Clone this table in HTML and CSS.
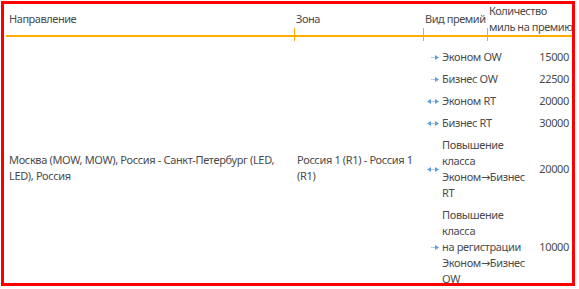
FILE: index.html
```html
<!DOCTYPE html>
<html lang="ru">
<head>
<meta charset="utf-8">
<title>Премии</title>
<link rel="stylesheet" href="styles.css">
</head>
<body>
<table class="routes">
  <colgroup>
    <col class="c-dir"><col class="c-zone"><col class="c-type"><col class="c-miles">
  </colgroup>
  <thead>
    <tr>
      <th class="h-dir">Направление</th>
      <th class="tick">Зона</th>
      <th class="tick">Вид премий</th>
      <th class="tick">Количество миль на премию</th>
    </tr>
  </thead>
  <tbody>
    <tr>
      <td class="dir">Москва (MOW, MOW), Россия - Санкт-Петербург (LED, LED), Россия</td>
      <td class="zone">Россия 1 (R1) - Россия 1 (R1)</td>
      <td class="awards-cell" colspan="2">
        <table class="awards">
          <colgroup><col class="a-ico"><col class="a-name"><col class="a-miles"></colgroup>
          <tbody>
            <tr>
              <td class="ico"><svg class="arr ow" width="8" height="5" viewBox="0 0 8 5"><rect x="0" y="2" width="5" height="1" fill="#a9cdee"/><path d="M4 0L8 2.5L4 5Z" fill="#5e9fdc"/></svg></td>
              <td class="name">Эконом OW</td>
              <td class="miles">15000</td>
            </tr>
            <tr>
              <td class="ico"><svg class="arr ow" width="8" height="5" viewBox="0 0 8 5"><rect x="0" y="2" width="5" height="1" fill="#a9cdee"/><path d="M4 0L8 2.5L4 5Z" fill="#5e9fdc"/></svg></td>
              <td class="name">Бизнес OW</td>
              <td class="miles">22500</td>
            </tr>
            <tr>
              <td class="ico"><svg class="arr rt" width="12" height="5" viewBox="0 0 12 5"><rect x="3" y="2" width="6" height="1" fill="#a9cdee"/><path d="M4 0L0 2.5L4 5Z M8 0L12 2.5L8 5Z" fill="#5e9fdc"/></svg></td>
              <td class="name">Эконом RT</td>
              <td class="miles">20000</td>
            </tr>
            <tr>
              <td class="ico"><svg class="arr rt" width="12" height="5" viewBox="0 0 12 5"><rect x="3" y="2" width="6" height="1" fill="#a9cdee"/><path d="M4 0L0 2.5L4 5Z M8 0L12 2.5L8 5Z" fill="#5e9fdc"/></svg></td>
              <td class="name">Бизнес RT</td>
              <td class="miles">30000</td>
            </tr>
            <tr>
              <td class="ico"><svg class="arr rt" width="12" height="5" viewBox="0 0 12 5"><rect x="3" y="2" width="6" height="1" fill="#a9cdee"/><path d="M4 0L0 2.5L4 5Z M8 0L12 2.5L8 5Z" fill="#5e9fdc"/></svg></td>
              <td class="name">Повышение класса Эконом→Бизнес RT</td>
              <td class="miles">20000</td>
            </tr>
            <tr>
              <td class="ico"><svg class="arr ow" width="8" height="5" viewBox="0 0 8 5"><rect x="0" y="2" width="5" height="1" fill="#a9cdee"/><path d="M4 0L8 2.5L4 5Z" fill="#5e9fdc"/></svg></td>
              <td class="name">Повышение класса<br>на регистрации Эконом→Бизнес OW</td>
              <td class="miles">10000</td>
            </tr>
          </tbody>
        </table>
      </td>
    </tr>
  </tbody>
</table>
<div class="frame"></div>
</body>
</html>
```
FILE: styles.css
```css
html, body {
  margin: 0;
  padding: 0;
  background: #ffffff;
}
body {
  font-family: "Noto Sans", "DejaVu Sans", sans-serif;
  font-size: 11px;
  letter-spacing: -0.35px;
  line-height: 16px;
  color: #4b4b4b;
  overflow: hidden;
}
.routes {
  margin: 2px 0 0 6px;
  width: 567px;
  table-layout: fixed;
  border-collapse: separate;
  border-spacing: 0;
}
.c-dir { width: 288px; }
.c-zone { width: 129px; }
.c-type { width: 64px; }
.c-miles { width: 86px; }

.routes th {
  position: relative;
  text-align: left;
  font-weight: normal;
  letter-spacing: -0.45px;
  vertical-align: middle;
  padding: 1px 0 0 2px;
  border-bottom: 2px solid #ffab00;
}
.routes th.h-dir { padding-left: 3px; }
.routes th.tick::before {
  content: "";
  position: absolute;
  left: 0;
  bottom: -6px;
  width: 1px;
  height: 13px;
  background: #ffab00;
}
.routes td {
  vertical-align: middle;
  padding: 0;
}
.routes td.dir { padding: 0 6px 0 3px; }
.routes td.zone { padding: 0 8px 0 3px; }
.routes td.awards-cell { padding: 9px 0; }

.awards {
  width: 150px;
  table-layout: fixed;
  border-collapse: separate;
  border-spacing: 0;
}
.a-ico { width: 19px; }
.a-name { width: 88px; }
.a-miles { width: 43px; }
.awards td {
  padding: 3px 0;
  vertical-align: middle;
}
.awards td.ico { padding-right: 3px; }
.arr {
  display: block;
  margin-left: auto;
}
.awards td.miles {
  text-align: right;
  padding-right: 4px;
}
.frame {
  position: absolute;
  left: 1px;
  top: 1px;
  width: 568px;
  height: 279px;
  border: 3px solid #ff0000;
  pointer-events: none;
}
```
